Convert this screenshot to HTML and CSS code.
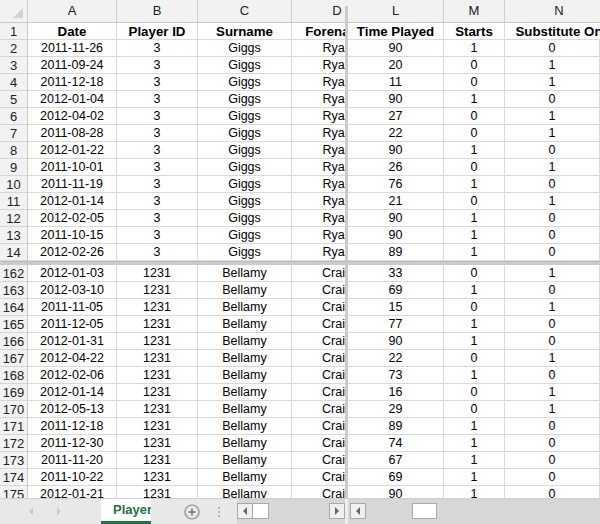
FILE: index.html
```html
<!DOCTYPE html>
<html>
<head>
<meta charset="utf-8">
<link rel="stylesheet" href="styles.css">
</head>
<body>
<div class="app">
  <div class="sheet">
    <div class="grid">
      <div class="c hd corner"><span class="tri"></span></div>
      <div class="c hd">A</div>
      <div class="c hd">B</div>
      <div class="c hd">C</div>
      <div class="c hd clip"><span class="wide">D</span></div>
      <div class="vs vs-top"></div>
      <div class="c hd">L</div>
      <div class="c hd">M</div>
      <div class="c hd clip"><span class="widen">N</span></div>

      <div class="c rh">1</div><div class="c b">Date</div><div class="c b">Player ID</div><div class="c b">Surname</div><div class="c b clip"><span class="wide">Forename</span></div><div class="vs"></div><div class="c b">Time Played</div><div class="c b">Starts</div><div class="c b clip"><span class="widen">Substitute On</span></div>

      <div class="c rh">2</div><div class="c">2011-11-26</div><div class="c">3</div><div class="c">Giggs</div><div class="c clip"><span class="wide">Ryan</span></div><div class="vs"></div><div class="c">90</div><div class="c">1</div><div class="c">0</div>
      <div class="c rh">3</div><div class="c">2011-09-24</div><div class="c">3</div><div class="c">Giggs</div><div class="c clip"><span class="wide">Ryan</span></div><div class="vs"></div><div class="c">20</div><div class="c">0</div><div class="c">1</div>
      <div class="c rh">4</div><div class="c">2011-12-18</div><div class="c">3</div><div class="c">Giggs</div><div class="c clip"><span class="wide">Ryan</span></div><div class="vs"></div><div class="c">11</div><div class="c">0</div><div class="c">1</div>
      <div class="c rh">5</div><div class="c">2012-01-04</div><div class="c">3</div><div class="c">Giggs</div><div class="c clip"><span class="wide">Ryan</span></div><div class="vs"></div><div class="c">90</div><div class="c">1</div><div class="c">0</div>
      <div class="c rh">6</div><div class="c">2012-04-02</div><div class="c">3</div><div class="c">Giggs</div><div class="c clip"><span class="wide">Ryan</span></div><div class="vs"></div><div class="c">27</div><div class="c">0</div><div class="c">1</div>
      <div class="c rh">7</div><div class="c">2011-08-28</div><div class="c">3</div><div class="c">Giggs</div><div class="c clip"><span class="wide">Ryan</span></div><div class="vs"></div><div class="c">22</div><div class="c">0</div><div class="c">1</div>
      <div class="c rh">8</div><div class="c">2012-01-22</div><div class="c">3</div><div class="c">Giggs</div><div class="c clip"><span class="wide">Ryan</span></div><div class="vs"></div><div class="c">90</div><div class="c">1</div><div class="c">0</div>
      <div class="c rh">9</div><div class="c">2011-10-01</div><div class="c">3</div><div class="c">Giggs</div><div class="c clip"><span class="wide">Ryan</span></div><div class="vs"></div><div class="c">26</div><div class="c">0</div><div class="c">1</div>
      <div class="c rh">10</div><div class="c">2011-11-19</div><div class="c">3</div><div class="c">Giggs</div><div class="c clip"><span class="wide">Ryan</span></div><div class="vs"></div><div class="c">76</div><div class="c">1</div><div class="c">0</div>
      <div class="c rh">11</div><div class="c">2012-01-14</div><div class="c">3</div><div class="c">Giggs</div><div class="c clip"><span class="wide">Ryan</span></div><div class="vs"></div><div class="c">21</div><div class="c">0</div><div class="c">1</div>
      <div class="c rh">12</div><div class="c">2012-02-05</div><div class="c">3</div><div class="c">Giggs</div><div class="c clip"><span class="wide">Ryan</span></div><div class="vs"></div><div class="c">90</div><div class="c">1</div><div class="c">0</div>
      <div class="c rh">13</div><div class="c">2011-10-15</div><div class="c">3</div><div class="c">Giggs</div><div class="c clip"><span class="wide">Ryan</span></div><div class="vs"></div><div class="c">90</div><div class="c">1</div><div class="c">0</div>
      <div class="c rh">14</div><div class="c">2012-02-26</div><div class="c">3</div><div class="c">Giggs</div><div class="c clip"><span class="wide">Ryan</span></div><div class="vs"></div><div class="c">89</div><div class="c">1</div><div class="c">0</div>

      <div class="hs"></div>

      <div class="c rh">162</div><div class="c">2012-01-03</div><div class="c">1231</div><div class="c">Bellamy</div><div class="c clip"><span class="wide">Craig</span></div><div class="vs"></div><div class="c">33</div><div class="c">0</div><div class="c">1</div>
      <div class="c rh">163</div><div class="c">2012-03-10</div><div class="c">1231</div><div class="c">Bellamy</div><div class="c clip"><span class="wide">Craig</span></div><div class="vs"></div><div class="c">69</div><div class="c">1</div><div class="c">0</div>
      <div class="c rh">164</div><div class="c">2011-11-05</div><div class="c">1231</div><div class="c">Bellamy</div><div class="c clip"><span class="wide">Craig</span></div><div class="vs"></div><div class="c">15</div><div class="c">0</div><div class="c">1</div>
      <div class="c rh">165</div><div class="c">2011-12-05</div><div class="c">1231</div><div class="c">Bellamy</div><div class="c clip"><span class="wide">Craig</span></div><div class="vs"></div><div class="c">77</div><div class="c">1</div><div class="c">0</div>
      <div class="c rh">166</div><div class="c">2012-01-31</div><div class="c">1231</div><div class="c">Bellamy</div><div class="c clip"><span class="wide">Craig</span></div><div class="vs"></div><div class="c">90</div><div class="c">1</div><div class="c">0</div>
      <div class="c rh">167</div><div class="c">2012-04-22</div><div class="c">1231</div><div class="c">Bellamy</div><div class="c clip"><span class="wide">Craig</span></div><div class="vs"></div><div class="c">22</div><div class="c">0</div><div class="c">1</div>
      <div class="c rh">168</div><div class="c">2012-02-06</div><div class="c">1231</div><div class="c">Bellamy</div><div class="c clip"><span class="wide">Craig</span></div><div class="vs"></div><div class="c">73</div><div class="c">1</div><div class="c">0</div>
      <div class="c rh">169</div><div class="c">2012-01-14</div><div class="c">1231</div><div class="c">Bellamy</div><div class="c clip"><span class="wide">Craig</span></div><div class="vs"></div><div class="c">16</div><div class="c">0</div><div class="c">1</div>
      <div class="c rh">170</div><div class="c">2012-05-13</div><div class="c">1231</div><div class="c">Bellamy</div><div class="c clip"><span class="wide">Craig</span></div><div class="vs"></div><div class="c">29</div><div class="c">0</div><div class="c">1</div>
      <div class="c rh">171</div><div class="c">2011-12-18</div><div class="c">1231</div><div class="c">Bellamy</div><div class="c clip"><span class="wide">Craig</span></div><div class="vs"></div><div class="c">89</div><div class="c">1</div><div class="c">0</div>
      <div class="c rh">172</div><div class="c">2011-12-30</div><div class="c">1231</div><div class="c">Bellamy</div><div class="c clip"><span class="wide">Craig</span></div><div class="vs"></div><div class="c">74</div><div class="c">1</div><div class="c">0</div>
      <div class="c rh">173</div><div class="c">2011-11-20</div><div class="c">1231</div><div class="c">Bellamy</div><div class="c clip"><span class="wide">Craig</span></div><div class="vs"></div><div class="c">67</div><div class="c">1</div><div class="c">0</div>
      <div class="c rh">174</div><div class="c">2011-10-22</div><div class="c">1231</div><div class="c">Bellamy</div><div class="c clip"><span class="wide">Craig</span></div><div class="vs"></div><div class="c">69</div><div class="c">1</div><div class="c">0</div>
      <div class="c rh">175</div><div class="c">2012-01-21</div><div class="c">1231</div><div class="c">Bellamy</div><div class="c clip"><span class="wide">Craig</span></div><div class="vs"></div><div class="c">90</div><div class="c">1</div><div class="c">0</div>
    </div>
  </div>

  <div class="bottombar">
    <div class="nav">
      <svg class="arrow" width="6" height="9" viewBox="0 0 6 9"><path d="M5 0.5L1 4.5l4 4z" fill="#c9c9c9"/></svg>
      <svg class="arrow" width="6" height="9" viewBox="0 0 6 9"><path d="M1 0.5l4 4-4 4z" fill="#c9c9c9"/></svg>
    </div>
    <div class="tab"><span class="tabtext">Player</span></div>
    <div class="tools">
      <svg class="plus" width="16" height="16" viewBox="0 0 16 16">
        <circle cx="8" cy="8" r="7" fill="none" stroke="#8a8a8a" stroke-width="1.2"/>
        <path d="M8 4.5v7M4.5 8h7" stroke="#6f6f6f" stroke-width="1.4"/>
      </svg>
      <svg class="dots" width="4" height="14" viewBox="0 0 4 14">
        <rect x="1" y="2" width="2" height="2" fill="#b5b5b5"/>
        <rect x="1" y="6" width="2" height="2" fill="#b5b5b5"/>
        <rect x="1" y="10" width="2" height="2" fill="#b5b5b5"/>
      </svg>
    </div>
    <div class="scroll left">
      <span class="btn"><svg width="6" height="8" viewBox="0 0 6 8"><path d="M5 0L1 4l4 4z" fill="#666"/></svg></span>
      <span class="thumb t1"></span>
      <span class="track"></span>
      <span class="btn"><svg width="6" height="8" viewBox="0 0 6 8"><path d="M1 0l4 4-4 4z" fill="#666"/></svg></span>
    </div>
    <div class="vsb"></div>
    <div class="scroll right">
      <span class="btn"><svg width="6" height="8" viewBox="0 0 6 8"><path d="M5 0L1 4l4 4z" fill="#666"/></svg></span>
      <span class="track t-a"></span>
      <span class="thumb t2"></span>
      <span class="track"></span>
    </div>
  </div>
</div>
</body>
</html>
```

FILE: styles.css
```css
* { box-sizing: border-box; }
html, body { margin: 0; padding: 0; }
body {
  width: 600px;
  height: 524px;
  overflow: hidden;
  background: #fff;
  font-family: "Liberation Sans", Arial, sans-serif;
  font-size: 12.5px;
  color: #000;
}
.app {
  width: 600px;
  height: 524px;
  display: flex;
  flex-direction: column;
}
.sheet {
  height: 498px;
  overflow: hidden;
  flex: none;
}
.grid {
  display: grid;
  grid-template-columns: 28px 89px 81px 94px 53px 3px 96px 61px 95px;
  grid-template-rows: 23px repeat(14, 17px) 4px repeat(14, 17px);
}
.c {
  border-right: 1px solid #d9d9d9;
  border-bottom: 1px solid #d9d9d9;
  text-align: center;
  line-height: 17px;
  white-space: nowrap;
  overflow: hidden;
}
.b { font-weight: bold; font-size: 13.3px; }
.hd {
  background: #f2f2f2;
  line-height: 22px;
  font-size: 13px;
  border-right-color: #d0d0d0;
  border-bottom-color: #c8c8c8;
  color: #222;
}
.corner { position: relative; }
.tri {
  position: absolute;
  right: 4px;
  bottom: 4px;
  width: 0;
  height: 0;
  border-left: 10px solid transparent;
  border-bottom: 10px solid #d2d2d2;
}
.rh {
  background: #f2f2f2;
  border-right-color: #c8c8c8;
  border-bottom-color: #d6d6d6;
  color: #222;
  font-size: 13px;
}
.clip { border-right: none; text-align: left; }
.wide { display: inline-block; width: 90px; text-align: center; }
.widen { display: inline-block; width: 108px; text-align: center; }
.vs {
  background: #cbcbcb;
}
.vs-top {
  background: linear-gradient(#f2f2f2 0 6px, #cbcbcb 6px);
}
.hs {
  grid-column: 1 / -1;
  background: #cbcbcb;
  border-top: 1px solid #bdbdbd;
}
.bottombar {
  height: 26px;
  flex: none;
  display: flex;
  background: #e8e8e8;
  border-top: 1px solid #d0d0d0;
}
.nav {
  width: 101px;
  display: flex;
  align-items: center;
  gap: 22px;
  padding-left: 28px;
}
.tab {
  width: 50px;
  background: #fff;
  border-bottom: 3px solid #217346;
  overflow: hidden;
  white-space: nowrap;
  padding-left: 12px;
  line-height: 22px;
}
.tabtext {
  color: #217346;
  font-weight: bold;
  font-size: 13px;
}
.tools {
  width: 86px;
  display: flex;
  align-items: center;
  padding-left: 33px;
  gap: 17px;
}
.scroll {
  display: flex;
  align-items: center;
  background: #d7d7d7;
  padding: 0 0 1px 0;
}
.scroll.left { width: 108px; }
.scroll.right { flex: 1; padding-left: 2px; }
.btn {
  width: 16px;
  height: 16px;
  background: #f0f0f0;
  border: 1px solid #a9a9a9;
  display: flex;
  align-items: center;
  justify-content: center;
  flex: none;
}
.thumb {
  height: 16px;
  background: #fff;
  border: 1px solid #a9a9a9;
  border-left: none;
  flex: none;
}
.t1 { width: 16px; }
.t2 { width: 25px; border-left: 1px solid #a9a9a9; }
.track { flex: 1; }
.t-a { flex: none; width: 46px; }
.vsb {
  width: 3px;
  background: #eeeeee;
}
```
